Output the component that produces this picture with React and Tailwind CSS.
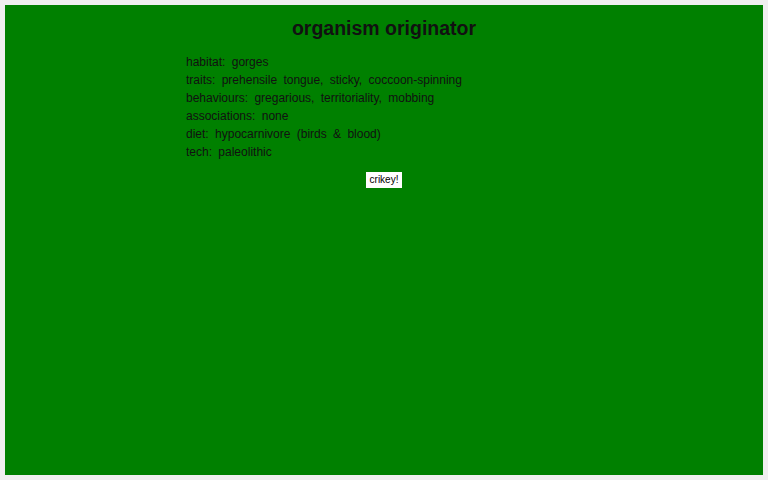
export default function App() {
  const traits = [
    ["habitat", "gorges"],
    ["traits", "prehensile tongue, sticky, coccoon-spinning"],
    ["behaviours", "gregarious, territoriality, mobbing"],
    ["associations", "none"],
    ["diet", "hypocarnivore (birds & blood)"],
    ["tech", "paleolithic"],
  ];

  return (
    <div className="min-h-screen bg-[#efefef] p-[5px] font-['Liberation_Sans',Arial,sans-serif]">
      <div className="h-[470px] bg-[#008000] text-[#111]">
        <h1 className="pt-[9px] text-center text-[19.5px] font-bold leading-[28px]">
          organism originator
        </h1>
        <div className="mx-auto mt-[11px] w-[396px] text-[12px] leading-[18px] [word-spacing:3px]">
          {traits.map(([k, v]) => (
            <div key={k}>
              {k}: {v}
            </div>
          ))}
        </div>
        <div className="mt-[11px] flex justify-center">
          <button className="h-[16px] bg-white px-[4px] text-[10px] leading-[16px] text-black">
            crikey!
          </button>
        </div>
      </div>
    </div>
  );
}
